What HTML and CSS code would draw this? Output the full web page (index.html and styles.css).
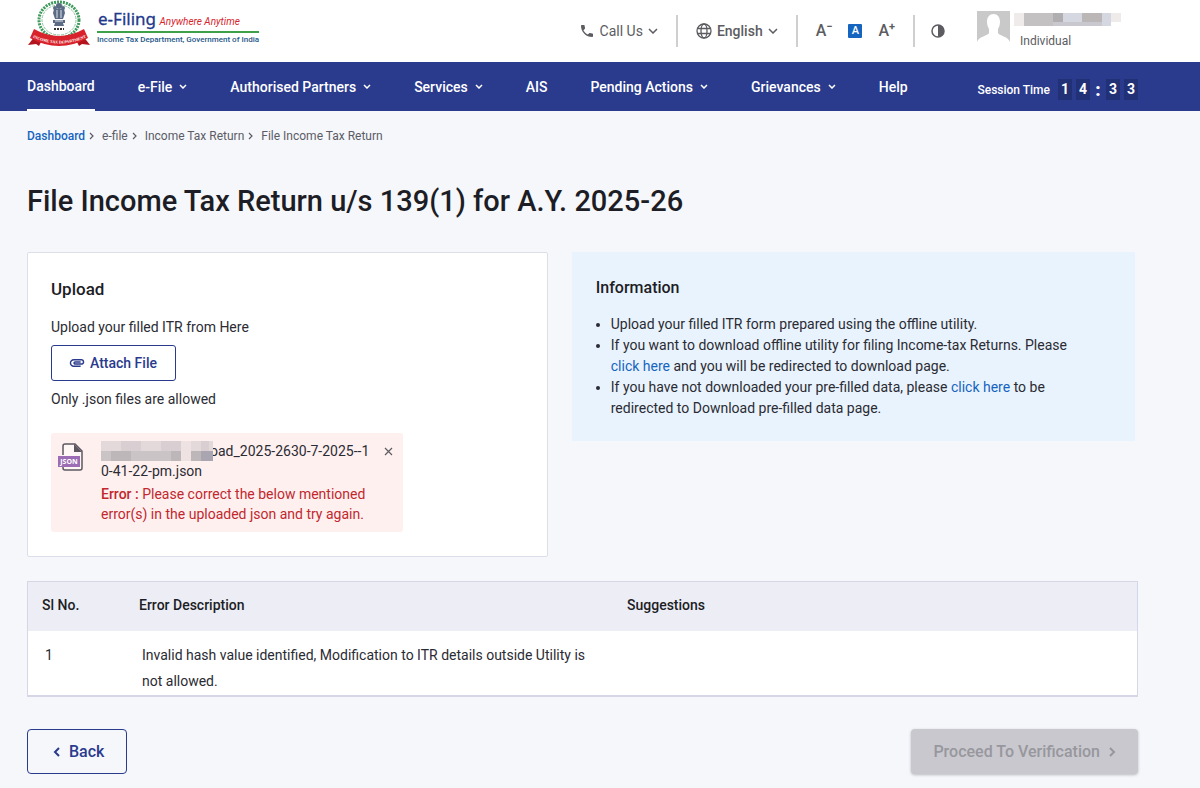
FILE: index.html
```html
<!DOCTYPE html>
<html lang="en">
<head>
  <meta charset="UTF-8" />
  <meta name="viewport" content="width=device-width, initial-scale=1.0" />
  <title>File Income Tax Return</title>
  <link rel="stylesheet" href="styles.css">
</head>
<body>
  <header class="topbar">
    <a href="#" class="logo">
      <svg class="emblem" width="64" height="48" viewBox="0 0 64 48">
        <ellipse cx="32" cy="20" rx="20" ry="18" fill="#fff" stroke="#3f9a5c" stroke-width="3" stroke-dasharray="2 1" />
        <ellipse cx="32" cy="20" rx="17" ry="15" fill="#fff" stroke="#8fc49d" stroke-width="1" stroke-dasharray="3 1" />
        <g fill="#5b6b84">
          <circle cx="32" cy="6" r="3" />
          <circle cx="28" cy="8" r="2" />
          <circle cx="36" cy="8" r="2" />
          <path d="M27 9h10l1 4-2 6h-8l-2-6z" />
          <path d="M26 20h12v3H26z" />
          <path d="M28 23h8l1 3H27z" />
        </g>
        <path d="M30 10v8M34 10v8M28 21h8" stroke="#dfe4ea" stroke-width="1" />
        <path d="M27 29h2M30 29h2M33 29h2M36 29h1" stroke="#333" stroke-width="2" />
        <path d="M8 36l-7 9 8-1 3 2 3-6zM56 36l7 9-8-1-3 2-3-6z" fill="#b3141d" />
        <path d="M7 29Q32 43 57 29L61 38Q32 54 3 38z" fill="#d8232c" />
        <path id="ribbonLine" d="M5 37Q32 50 60 37" fill="none" />
        <text class="ribbon-text"><textPath href="#ribbonLine" startOffset="50%" text-anchor="middle">INCOME TAX DEPARTMENT</textPath></text>
      </svg>
      <span class="logo-text">
        <span class="logo-top"><b>e-Filing</b> <i>Anywhere Anytime</i></span>
        <span class="logo-sub">Income Tax Department, Government of India</span>
      </span>
    </a>

    <div class="tools">
      <button class="tool call">
        <svg width="16" height="16" viewBox="0 0 24 24"><path fill="currentColor" d="M6.600 10.800c1.400 2.800 3.800 5.100 6.600 6.600l2.200-2.200c.3-.3.7-.4 1-.2 1.100.4 2.300.6 3.600.6.600 0 1 .4 1 1V20c0 .6-.4 1-1 1C10.600 21 3 13.400 3 4c0-.6.4-1 1-1h3.500c.6 0 1 .4 1 1 0 1.300.2 2.500.6 3.600.1.300 0 .7-.2 1z"/></svg>
        Call Us
        <svg class="chev" width="10" height="6" viewBox="0 0 10 6"><path d="M1 1l4 4 4-4"/></svg>
      </button>
      <button class="tool lang">
        <svg class="globe" width="16" height="16" viewBox="0 0 16 16"><circle cx="8" cy="8" r="7"/><ellipse cx="8" cy="8" rx="3" ry="7"/><path d="M1 5.500h14M1 10.500h14"/></svg>
        English
        <svg class="chev" width="10" height="6" viewBox="0 0 10 6"><path d="M1 1l4 4 4-4"/></svg>
      </button>
      <div class="tool sizes">
        <button class="size" aria-label="Smaller text">A<sup>−</sup></button>
        <button class="size current" aria-label="Normal text">A</button>
        <button class="size" aria-label="Larger text">A<sup>+</sup></button>
      </div>
      <button class="tool contrast" aria-label="Contrast">
        <svg width="14" height="14" viewBox="0 0 14 14"><circle cx="7" cy="7" r="6" fill="none" stroke="currentColor" stroke-width="1.500"/><path d="M7 1a6 6 0 010 12z" fill="currentColor"/></svg>
      </button>
    </div>

    <div class="user">
      <svg width="33" height="33" viewBox="0 0 33 33"><path fill="#c9c9c9" d="M0 0h33v33H0z"/><path fill="#fff" d="M16.500 3c4 0 6.500 3 6.500 8 0 3-1 5-2 7v4c1 3 10 3 12 9v2H0v-2c2-6 11-6 12-9v-4c-1-2-2-4-2-7 0-5 2.500-8 6.500-8z"/></svg>
      <div class="user-info">
        <svg width="108" height="14" viewBox="0 0 108 14">
          <path fill="#eeebea" d="M0 0h10v13H0zM97 0h10v9H97z"/>
          <path fill="#c3c1c2" d="M10 0h29v13H10z"/>
          <path fill="#b0aeb0" d="M39 0h10v9H39z"/>
          <path fill="#d6d8e1" d="M49 0h19v9H49zM88 0h9v13h-9z"/>
          <path fill="#bbb7b6" d="M68 0h20v9H68z"/>
          <path fill="#c8c8ce" d="M39 9h49v4H39z"/>
        </svg>
        <span>Individual</span>
      </div>
    </div>
  </header>

  <nav class="nav">
    <a href="#" class="active">Dashboard</a>
    <a href="#">e-File <svg class="chev" width="8" height="5" viewBox="0 0 8 5"><path d="M1 1l3 3 3-3"/></svg></a>
    <a href="#">Authorised Partners <svg class="chev" width="8" height="5" viewBox="0 0 8 5"><path d="M1 1l3 3 3-3"/></svg></a>
    <a href="#">Services <svg class="chev" width="8" height="5" viewBox="0 0 8 5"><path d="M1 1l3 3 3-3"/></svg></a>
    <a href="#">AIS</a>
    <a href="#">Pending Actions <svg class="chev" width="8" height="5" viewBox="0 0 8 5"><path d="M1 1l3 3 3-3"/></svg></a>
    <a href="#">Grievances <svg class="chev" width="8" height="5" viewBox="0 0 8 5"><path d="M1 1l3 3 3-3"/></svg></a>
    <a href="#">Help</a>
    <div class="session">
      Session Time
      <div class="clock"><span>1</span><span>4</span><b>:</b><span>3</span><span>3</span></div>
    </div>
  </nav>

  <main class="content">
    <div class="breadcrumb">
      <a href="#">Dashboard</a>
      <svg class="chev" width="5" height="8" viewBox="0 0 5 8"><path d="M1 1l3 3-3 3"/></svg>
      <span>e-file</span>
      <svg class="chev" width="5" height="8" viewBox="0 0 5 8"><path d="M1 1l3 3-3 3"/></svg>
      <span>Income Tax Return</span>
      <svg class="chev" width="5" height="8" viewBox="0 0 5 8"><path d="M1 1l3 3-3 3"/></svg>
      <span>File Income Tax Return</span>
    </div>

    <h1>File Income Tax Return u/s 139(1) for A.Y. 2025-26</h1>

    <div class="panels">
      <section class="upload">
        <h2>Upload</h2>
        <p>Upload your filled ITR from Here</p>
        <button class="attach">
          <svg width="16" height="10" viewBox="1 6 22 13"><path fill="currentColor" d="M2 12.500C2 9.460 4.460 7 7.500 7H18c2.210 0 4 1.790 4 4s-1.790 4-4 4H9.500C8.120 15 7 13.880 7 12.500S8.120 10 9.500 10H17v2H9.410c-.55 0-.55 1 0 1H18c1.100 0 2-.9 2-2s-.9-2-2-2H7.500C5.570 9 4 10.570 4 12.500S5.570 16 7.500 16H17v2H7.500C4.460 18 2 15.540 2 12.500z"/></svg>
          Attach File
        </button>
        <p>Only .json files are allowed</p>

        <div class="file">
          <svg class="file-icon" width="26" height="28" viewBox="0 0 26 28">
            <path d="M5 12V3q0-2 2-2h10l7 7v17q0 2-2 2H7q-2 0-2-2v-2" fill="#fff6f6" stroke="#5d5860" stroke-width="1.500"/>
            <path d="M16 1v8h8z" fill="#5d5860"/>
            <path d="M0 13h22v11H0z" fill="#9c6cb4"/>
            <text x="11" y="21" text-anchor="middle">JSON</text>
          </svg>
          <div class="file-text">
            <div class="file-name"><svg class="mosaic" width="112" height="20" viewBox="0 0 112 20">
              <path fill="#e3d8da" d="M0 0h80v10H0zM90 0h22v10H90z"/>
              <path fill="#d9ced1" d="M20 0h20v10H20zM60 0h20v10H60zM100 0h8v10h-8z"/>
              <path fill="#cbc4c6" d="M0 10h80v10H0z"/>
              <path fill="#bdb7ba" d="M10 10h20v10H10zM70 10h10v10H70zM90 10h10v10H90z"/>
              <path fill="#eee2e3" d="M80 0h10v20H80z"/>
              <path fill="#aaa6b1" d="M100 10h12v10h-12z"/>
            </svg>oad_2025-2630-7-2025--10-41-22-pm.json</div>
            <div class="file-error"><b>Error :</b> Please correct the below mentioned error(s) in the uploaded json and try again.</div>
          </div>
          <button class="remove" aria-label="Remove file">
            <svg width="9" height="9" viewBox="0 0 9 9"><path stroke="currentColor" stroke-width="1.200" d="M1 1l7 7M8 1L1 8"/></svg>
          </button>
        </div>
      </section>

      <section class="info">
        <h3>Information</h3>
        <ul>
          <li>Upload your filled ITR form prepared using the offline utility.</li>
          <li>If you want to download offline utility for filing Income-tax Returns. Please <a href="#">click here</a> and you will be redirected to download page.</li>
          <li>If you have not downloaded your pre-filled data, please <a href="#">click here</a> to be redirected to Download pre-filled data page.</li>
        </ul>
      </section>
    </div>

    <table class="errors">
      <thead>
        <tr><th class="col-no">Sl No.</th><th class="col-desc">Error Description</th><th>Suggestions</th></tr>
      </thead>
      <tbody>
        <tr><td>1</td><td>Invalid hash value identified, Modification to ITR details outside Utility is not allowed.</td><td></td></tr>
      </tbody>
    </table>

    <div class="actions">
      <button class="back"><svg class="chev" width="7" height="10" viewBox="0 0 7 10"><path d="M6 1L2 5l4 4"/></svg>Back</button>
      <button class="proceed" disabled>Proceed To Verification<svg class="chev" width="7" height="10" viewBox="0 0 7 10"><path d="M1 1l4 4-4 4"/></svg></button>
    </div>
  </main>
</body>
</html>
```
FILE: styles.css
```css
* {
  box-sizing: border-box;
}

body {
  margin: 0;
  background-color: #f5f7fb;
  color: #2b2b33;
  font-family: Roboto, "Liberation Sans", sans-serif;
  font-size: 14px;
  line-height: 20px;
}

h1, h2, h3, p, ul {
  margin: 0;
}

a {
  color: #1565c0;
  text-decoration: none;
}

button {
  font-family: inherit;
  font-size: 14px;
  color: inherit;
  background: none;
  border: none;
  padding: 0;
  cursor: pointer;
}

.chev {
  fill: none;
  stroke: currentColor;
  stroke-width: 1.5;
}

/* top bar */
.topbar {
  display: flex;
  align-items: center;
  height: 62px;
  padding: 0 62px 0 27px;
  background-color: #fff;
  color: #5c5c61;
}

.logo {
  display: flex;
  align-items: flex-start;
  gap: 6px;
  height: 100%;
}

.logo-text {
  display: flex;
  flex-direction: column;
  padding-top: 9px;
}

.logo-top {
  line-height: 19px;
  padding-left: 1px;
  border-bottom: 2px solid #3fa04a;
  white-space: nowrap;
}

.logo-top b {
  font-family: "Noto Sans", sans-serif;
  font-size: 17px;
  font-weight: 400;
  color: #22388c;
  -webkit-text-stroke: 0.3px #22388c;
}

.logo-top i {
  font-size: 10px;
  color: #d8232c;
}

.logo-sub {
  font-size: 8px;
  font-weight: 500;
  line-height: 14px;
  color: #1f5787;
  white-space: nowrap;
}

.ribbon-text {
  font-family: "Liberation Serif", serif;
  font-size: 4px;
  font-weight: 700;
  fill: #fff;
}

.tools {
  display: flex;
  margin-left: auto;
}

.tool {
  display: flex;
  align-items: center;
  height: 32px;
  padding: 0 18px;
  border-right: 2px solid #cfcfd2;
}

.call,
.lang {
  gap: 5px;
}

.lang {
  font-weight: 500;
}

.globe {
  fill: none;
  stroke: currentColor;
  stroke-width: 1.3;
}

.sizes {
  gap: 16px;
}

.size {
  font-size: 16px;
  font-weight: 500;
  line-height: 14px;
}

.size sup {
  font-size: 11px;
  font-weight: 700;
  line-height: 0;
}

.size.current {
  width: 14px;
  font-size: 11px;
  color: #fff;
  background-color: #1565c0;
  border-radius: 1px;
}

.contrast {
  padding: 0 16px;
  border-right: none;
}

.user {
  display: flex;
  gap: 4px;
  width: 161px;
  margin-left: 16px;
  padding-bottom: 4px;
}

.user-info {
  display: flex;
  flex-direction: column;
  gap: 7px;
  padding-top: 2px;
}

.user-info span {
  padding-left: 6px;
  font-size: 12px;
  line-height: 14px;
}

/* main menu */
.nav {
  display: flex;
  gap: 43px;
  height: 49px;
  padding: 0 62px 0 27px;
  background-color: #2a3a8d;
  color: #fff;
}

.nav a {
  display: flex;
  align-items: center;
  gap: 7px;
  color: #fff;
  font-weight: 500;
  white-space: nowrap;
}

.nav .active {
  border-bottom: 2px solid #fff;
}

.session {
  display: flex;
  align-items: center;
  gap: 8px;
  margin-left: auto;
  padding-top: 6px;
  font-size: 12px;
  font-weight: 500;
  white-space: nowrap;
}

.clock {
  display: flex;
  align-items: center;
  gap: 4px;
  font-size: 14px;
  font-weight: 700;
}

.clock span {
  width: 14px;
  line-height: 21px;
  text-align: center;
  background-color: #223076;
}

.clock b {
  width: 8px;
  font-size: 18px;
  text-align: center;
}

/* page content */
.content {
  padding: 16px 62px 16px 27px;
}

.breadcrumb {
  display: flex;
  align-items: center;
  font-size: 12px;
  line-height: 18px;
  color: #5c5c66;
}

.breadcrumb a {
  font-weight: 500;
}

.breadcrumb .chev {
  margin: 0 8px 0 4px;
  stroke-width: 1.2;
}

h1 {
  margin: 38px 0 33px;
  font-size: 29px;
  font-weight: 500;
  line-height: 36px;
  color: #1d1d25;
}

.panels {
  display: flex;
  align-items: flex-start;
  gap: 24px;
  padding-right: 3px;
}

.upload {
  width: 47%;
  padding: 24px 23px;
  background-color: #fff;
  border: 1px solid #dcdfea;
  border-radius: 2px;
}

.upload h2 {
  margin-bottom: 16px;
  font-size: 17px;
  font-weight: 500;
  line-height: 24px;
  color: #1d1d25;
}

.attach {
  display: flex;
  align-items: center;
  gap: 5px;
  height: 36px;
  margin: 8px 0;
  padding: 0 18px 0 17px;
  border: 1px solid #2a3a8d;
  border-radius: 3px;
  color: #2a3a8d;
  font-weight: 500;
}

.file {
  display: flex;
  align-items: flex-start;
  width: 352px;
  margin-top: 24px;
  padding: 8px 10px 8px 7px;
  background-color: #fff0f0;
  border-radius: 3px;
}

.file-icon {
  margin: 2px 17px 0 0;
}

.file-icon text {
  font-family: "Open Sans", sans-serif;
  font-size: 7px;
  font-weight: 700;
  fill: #fff;
}

.file-text {
  flex: 1;
  padding-right: 10px;
}

.file-name {
  word-break: break-all;
}

.mosaic {
  margin: -3px -3px 0 0;
  position: relative;
  vertical-align: middle;
}

.file-error {
  padding-top: 3px;
  color: #c1272d;
}

.file-error b {
  font-weight: 500;
}

.remove {
  padding: 2px 0;
  color: #5c5c61;
}

.info {
  flex: 1;
  padding: 24px 40px 22px 24px;
  background-color: #e9f3fd;
}

.info h3 {
  margin-bottom: 14px;
  font-size: 16px;
  font-weight: 500;
  line-height: 24px;
  color: #1d1d25;
}

.info ul {
  padding-left: 15px;
  line-height: 21px;
}

.errors {
  width: 100%;
  margin-top: 24px;
  border: 1px solid #d5d7e6;
  border-bottom-width: 2px;
  border-spacing: 0;
  background-color: #fff;
  table-layout: fixed;
}

.errors th {
  height: 49px;
  padding: 0 14px 4px;
  background-color: #ecedf5;
  font-weight: 500;
  text-align: left;
  color: #1d1d25;
}

.errors td {
  padding: 11px 17px 1px;
  line-height: 26px;
  vertical-align: top;
}

.col-no {
  width: 97px;
}

.col-desc {
  width: 488px;
}

.actions {
  display: flex;
  justify-content: space-between;
  margin-top: 32px;
}

.back,
.proceed {
  display: flex;
  align-items: center;
  gap: 9px;
  height: 45px;
  padding: 0 22px;
  border-radius: 4px;
  font-size: 16px;
  font-weight: 500;
}

.back {
  padding-left: 25px;
  border: 1px solid #2a3a8d;
  color: #2a3a8d;
}

.back .chev,
.proceed .chev {
  stroke-width: 2;
}

.proceed {
  background-color: #c9c8ce;
  color: #97979d;
  box-shadow: 0 1px 3px rgba(0, 0, 0, 0.25);
}
```
